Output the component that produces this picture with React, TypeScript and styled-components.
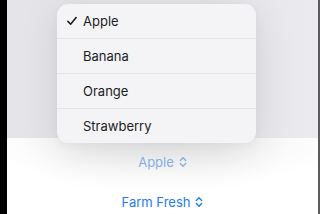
import React from "react";
import styled, { createGlobalStyle } from "styled-components";

const Global = createGlobalStyle`
  html, body { margin: 0; padding: 0; background: #ffffff; }
  body { font-family: Inter, "Liberation Sans", sans-serif; -webkit-font-smoothing: antialiased; }
`;

const Frame = styled.div`
  display: flex;
  width: 320px;
  height: 214px;
  overflow: hidden;
`;

const LeftEdge = styled.div`
  width: 7px;
  background: #000;
  flex-shrink: 0;
`;

const RightEdge = styled.div`
  width: 2px;
  background: #5c5c5e;
  flex-shrink: 0;
`;

const Main = styled.div`
  position: relative;
  flex: 1;
  display: flex;
  flex-direction: column;
`;

const Backdrop = styled.div`
  height: 138px;
  background: linear-gradient(90deg, #e4e4e9 0%, #e3e3e8 60%, #ebebef 100%);
  flex-shrink: 0;
`;

const Lower = styled.div`
  flex: 1;
  display: flex;
  flex-direction: column;
  align-items: center;
  padding-top: 14px;
  gap: 20px;
  background: radial-gradient(ellipse 180px 50px at 50% 0%, #ececee 0%, #fafafa 70%, #ffffff 100%);
`;

const PopupButton = styled.button<{ $dim?: boolean }>`
  display: flex;
  align-items: center;
  gap: 5px;
  border: 0;
  background: transparent;
  padding: 0;
  font-family: Inter, "Liberation Sans", sans-serif;
  font-size: 13px;
  line-height: 20px;
  color: ${(p) => (p.$dim ? "#88b5ee" : "#1f7bef")};
  cursor: pointer;
`;

const Menu = styled.div`
  position: absolute;
  left: 50px;
  top: 4px;
  width: 199px;
  border-radius: 11px;
  background: #f4f4f6;
  box-shadow: 0 10px 40px rgba(0, 0, 0, 0.10), 0 2px 8px rgba(0, 0, 0, 0.04);
  overflow: hidden;
  display: flex;
  flex-direction: column;
`;

const Item = styled.div<{ $first?: boolean }>`
  height: 34px;
  display: flex;
  align-items: center;
  padding-left: 10px;
  gap: 6px;
  font-size: 13px;
  color: #1c1c1e;
  border-top: ${(p) => (p.$first ? "0" : "1.5px solid #e5e5e8")};
`;

const CheckSlot = styled.span`
  width: 10px;
  display: flex;
  align-items: center;
  justify-content: center;
`;

const Check = () => (
  <svg width="11" height="10" viewBox="0 0 11 10">
    <path d="M1 5.4 L4 8.6 L10 1.2" fill="none" stroke="#1c1c1e" strokeWidth="1.7" strokeLinecap="round" strokeLinejoin="round" />
  </svg>
);

const Chevrons = ({ color }: { color: string }) => (
  <svg width="8" height="12" viewBox="0 0 8 12">
    <path d="M1.3 4.5 L4 1.8 L6.7 4.5 M1.3 7.5 L4 10.2 L6.7 7.5" fill="none" stroke={color} strokeWidth="1.4" strokeLinecap="round" strokeLinejoin="round" />
  </svg>
);

const fruits = ["Apple", "Banana", "Orange", "Strawberry"];

export default function App() {
  return (
    <>
      <Global />
      <Frame>
        <LeftEdge />
        <Main>
          <Backdrop />
          <Lower>
            <PopupButton $dim>
              Apple <Chevrons color="#88b5ee" />
            </PopupButton>
            <PopupButton>
              Farm Fresh <Chevrons color="#1f7bef" />
            </PopupButton>
          </Lower>
          <Menu>
            {fruits.map((f, i) => (
              <Item key={f} $first={i === 0}>
                <CheckSlot>{i === 0 ? <Check /> : null}</CheckSlot>
                {f}
              </Item>
            ))}
          </Menu>
        </Main>
        <RightEdge />
      </Frame>
    </>
  );
}
